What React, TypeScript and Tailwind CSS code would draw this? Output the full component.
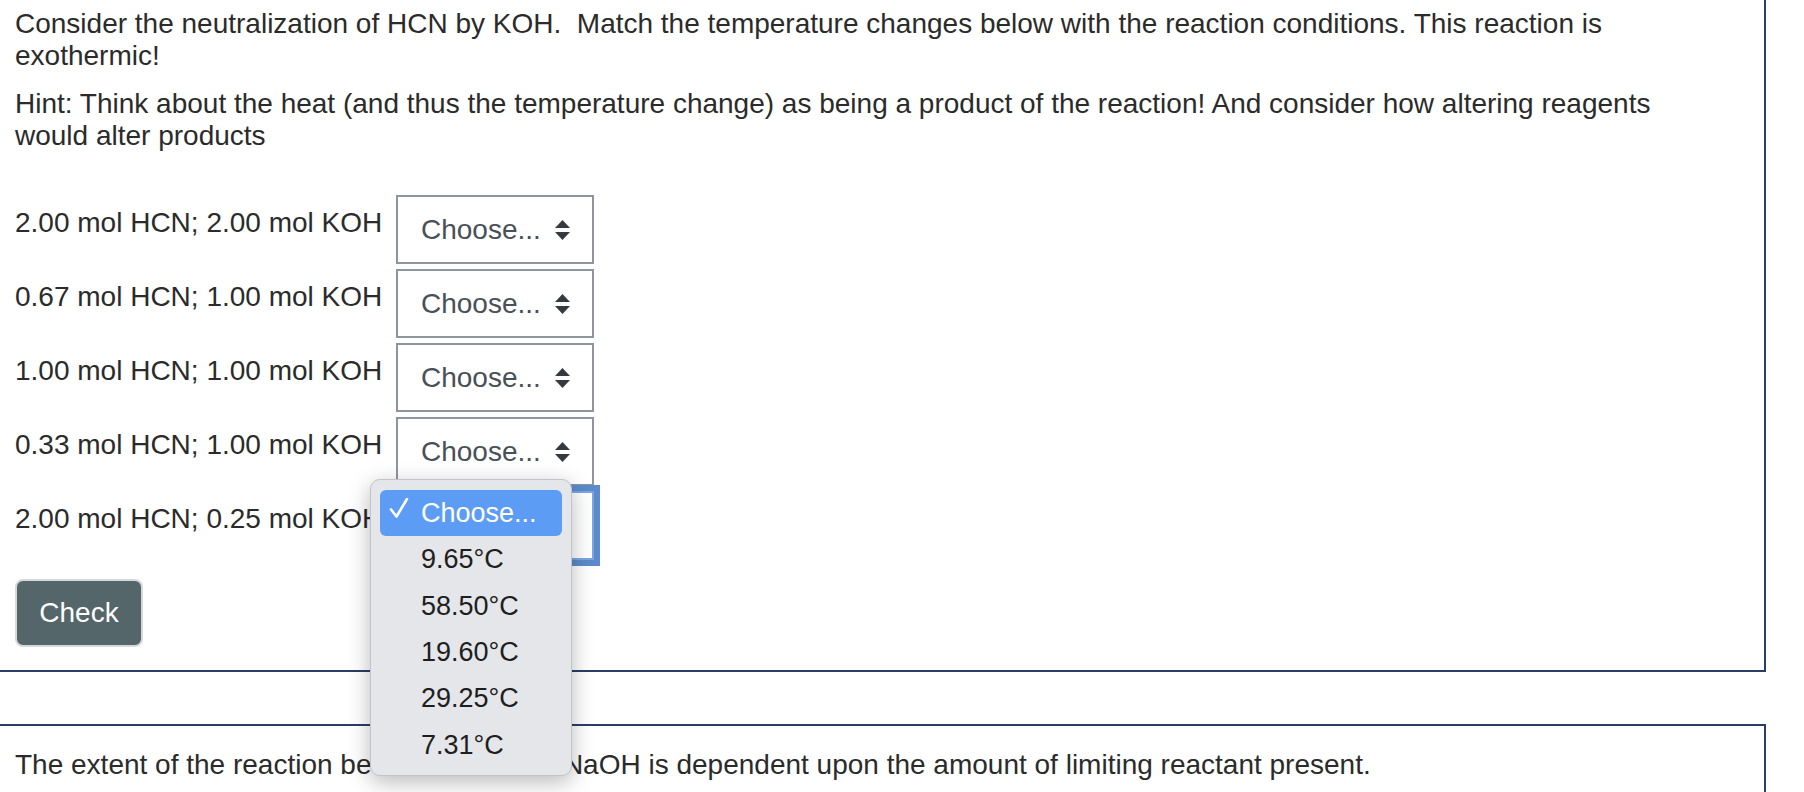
import React from "react";

const rows = [
  "2.00 mol HCN; 2.00 mol KOH",
  "0.67 mol HCN; 1.00 mol KOH",
  "1.00 mol HCN; 1.00 mol KOH",
  "0.33 mol HCN; 1.00 mol KOH",
  "2.00 mol HCN; 0.25 mol KOH",
];

const options = ["9.65°C", "58.50°C", "19.60°C", "29.25°C", "7.31°C"];

function Arrows() {
  return (
    <svg width="15" height="20" viewBox="0 0 15 20" className="shrink-0">
      <path d="M0 8 L7.5 0 L15 8 Z" fill="#343a40" />
      <path d="M0 12 L15 12 L7.5 20 Z" fill="#343a40" />
    </svg>
  );
}

function Select({ focused }: { focused?: boolean }) {
  return (
    <div
      className={
        focused
          ? "w-[198px] h-[69px] border-2 border-[#7ba7e1] bg-white flex items-center justify-between pl-[23px] pr-[22px] text-[#495057] shadow-[0_0_0_6px_#5b8bcc]"
          : "w-[198px] h-[69px] border-2 border-[#8f959e] bg-white flex items-center justify-between pl-[23px] pr-[22px] text-[#495057]"
      }
    >
      <span className="leading-[32px]">Choose...</span>
      <Arrows />
    </div>
  );
}

export default function App() {
  return (
    <div className="relative w-[1804px] h-[792px] overflow-hidden bg-white text-[28px] text-[#2b2b2b] font-['Liberation_Sans',Arial,sans-serif]">
      <div className="mr-[38px] border-r-2 border-b-2 border-[#2a3d66] pl-[15px] pt-[8px] pb-[23px]">
        <div className="w-[1680px] leading-[32px]">
          <p>
            Consider the neutralization of HCN by KOH.&nbsp; Match the temperature changes below with the reaction conditions. This reaction is exothermic!
          </p>
          <p className="mt-[16px]">
            Hint: Think about the heat (and thus the temperature change) as being a product of the reaction! And consider how altering reagents would alter products
          </p>
        </div>
        <div className="mt-[43px] flex flex-col">
          {rows.map((r, i) => (
            <div key={r} className="flex items-start h-[74px]">
              <div className="w-[381px] pt-[12px] leading-[32px] whitespace-nowrap">{r}</div>
              <Select focused={i === 4} />
            </div>
          ))}
        </div>
        <button className="mt-[14px] w-[128px] h-[68px] rounded-[8px] bg-[#55666b] border-2 border-[#d6d9da] text-white text-[28px] leading-[32px] flex items-center justify-center">
          Check
        </button>
      </div>

      <div className="mt-[52px] mr-[38px] border-t-2 border-r-2 border-[#2a3d66] pl-[15px] pt-[23px] h-[200px]">
        <p className="leading-[32px] whitespace-nowrap">
          The extent of the reaction between HCl and NaOH is dependent upon the amount of limiting reactant present.
        </p>
      </div>

      <div className="absolute left-[370px] top-[479px] w-[202px] h-[297px] rounded-[10px] bg-[#e4e6e9] border border-[#c2c4c7] shadow-[0_6px_22px_rgba(0,0,0,0.28)] pt-[10px] text-[27px]">
        <div className="relative mx-[9px] h-[46px] rounded-[6px] bg-[#5d9cf5] text-white flex items-center pl-[41px]">
          <svg width="20" height="22" viewBox="0 0 20 22" className="absolute left-[9px] top-[7px]">
            <path d="M2 12.5 L7.5 19.5 L18 2" stroke="white" strokeWidth="2.6" fill="none" strokeLinecap="round" strokeLinejoin="round" />
          </svg>
          <span className="leading-[32px]">Choose...</span>
        </div>
        {options.map((o) => (
          <div key={o} className="mx-[9px] h-[46.4px] flex items-center pl-[41px] text-[#1e1e1e]">
            <span className="leading-[32px]">{o}</span>
          </div>
        ))}
      </div>
    </div>
  );
}
